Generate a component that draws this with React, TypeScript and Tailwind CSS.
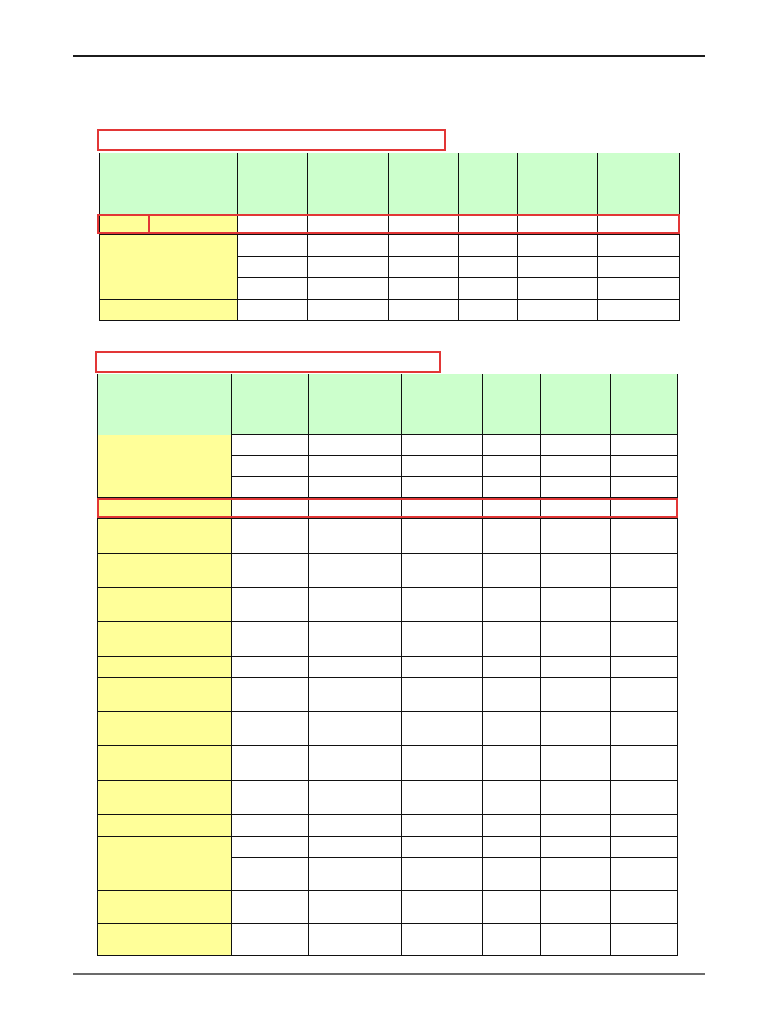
import React from "react";

type Row = { h: number; red?: boolean; mark?: boolean; shift?: boolean };
type Block = { kind: "row"; row: Row } | { kind: "group"; rows: number[] };

const cell = "border-r border-b border-[#111] shrink-0";

const HeaderRow: React.FC<{ cols: number[]; h: number; bottomLine: boolean }> = ({ cols, h, bottomLine }) => (
  <div className="flex bg-[#ccffcc]" style={{ height: h }}>
    {cols.map((w, i) => (
      <div
        key={i}
        className={`border-r border-[#111] shrink-0 ${bottomLine && i > 0 ? "border-b" : ""}`}
        style={{ width: w }}
      />
    ))}
  </div>
);

const DataRow: React.FC<{ cols: number[]; row: Row }> = ({ cols, row }) => (
  <div className="relative flex" style={{ height: row.h }}>
    {cols.map((w, i) => (
      <div key={i} className={`${cell} ${i === 0 ? "bg-[#ffff99]" : "bg-white"}`} style={{ width: w }} />
    ))}
    {row.red && (
      <div
        className={`absolute z-10 right-0 top-0 bottom-[1px] border-2 border-[#e23636] pointer-events-none ${
          row.shift ? "-left-[3px]" : "-left-[1px]"
        }`}
      />
    )}
    {row.mark && (
      <div className="absolute z-10 -left-[3px] top-0 bottom-[1px] w-[53px] border-2 border-[#e23636] pointer-events-none" />
    )}
  </div>
);

const Group: React.FC<{ cols: number[]; rows: number[] }> = ({ cols, rows }) => {
  const total = rows.reduce((a, b) => a + b, 0);
  return (
    <div className="flex" style={{ height: total }}>
      <div className={`${cell} bg-[#ffff99]`} style={{ width: cols[0] }} />
      <div className="flex flex-col">
        {rows.map((h, r) => (
          <div key={r} className="flex" style={{ height: h }}>
            {cols.slice(1).map((w, i) => (
              <div key={i} className={`${cell} bg-white`} style={{ width: w }} />
            ))}
          </div>
        ))}
      </div>
    </div>
  );
};

const Sheet: React.FC<{ cols: number[]; blocks: Block[]; headerLine: boolean }> = ({ cols, blocks, headerLine }) => (
  <div className="border-l border-[#111] w-fit">
    <HeaderRow cols={cols} h={61} bottomLine={headerLine} />
    {blocks.map((b, i) =>
      b.kind === "row" ? (
        <DataRow key={i} cols={cols} row={b.row} />
      ) : (
        <Group key={i} cols={cols} rows={b.rows} />
      )
    )}
  </div>
);

const cols1 = [138, 70, 81, 70, 59, 80, 82];
const cols2 = [134, 77, 93, 81, 58, 70, 67];

const blocks1: Block[] = [
  { kind: "row", row: { h: 21, red: true, mark: true, shift: true } },
  { kind: "group", rows: [22, 21, 22] },
  { kind: "row", row: { h: 21 } },
];

const plain = (h: number): Block => ({ kind: "row", row: { h } });

const blocks2: Block[] = [
  { kind: "group", rows: [21, 21, 21] },
  { kind: "row", row: { h: 21, red: true } },
  ...[35, 34, 34, 35, 21, 34, 34, 35, 34, 22].map(plain),
  { kind: "group", rows: [21, 33] },
  plain(33),
  plain(32),
];

export default function App() {
  return (
    <div className="w-[768px] h-[1024px] bg-white overflow-hidden font-['Liberation_Sans',sans-serif]">
      <div className="mt-[55px] ml-[73px] w-[632px] h-[2px] bg-[#1c1c1c]" />

      <div className="mt-[72px] ml-[97px] w-[349px] h-[22px] border-2 border-[#e23636]" />
      <div className="mt-[2px] ml-[99px]">
        <Sheet cols={cols1} blocks={blocks1} headerLine={false} />
      </div>

      <div className="mt-[30px] ml-[95px] w-[346px] h-[22px] border-2 border-[#e23636]" />
      <div className="mt-[1px] ml-[97px]">
        <Sheet cols={cols2} blocks={blocks2} headerLine={true} />
      </div>

      <div className="mt-[17px] ml-[73px] w-[632px] h-[2px] bg-[#6b6b6b]" />
    </div>
  );
}
